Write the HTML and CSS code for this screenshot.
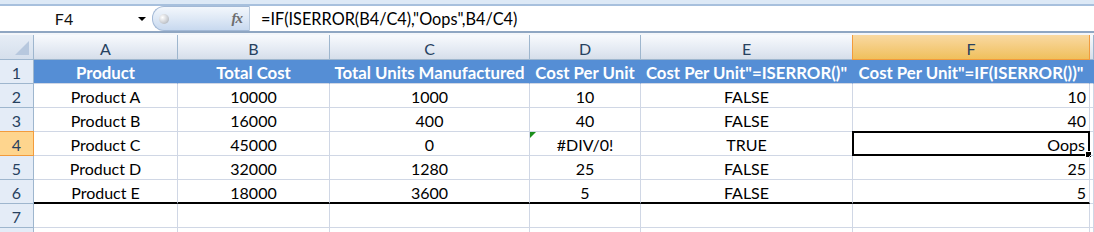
FILE: index.html
```html
<!DOCTYPE html>
<html>
<head>
<meta charset="utf-8">
<link rel="stylesheet" href="styles.css">
</head>
<body>
<div class="app">
  <div class="topstrip"></div>
  <div class="fbar">
    <div class="namebox"><span class="nb-text">F4</span><span class="nb-arrow"></span></div>
    <div class="fxbtn"><span class="knob"></span><span class="fx">fx</span></div>
    <div class="formula">=IF(ISERROR(B4/C4),"Oops",B4/C4)</div>
  </div>
  <div class="fbar-gap"></div>
  <div class="sheet">
    <div class="ch corner"><span class="tri"></span></div>
    <div class="ch">A</div><div class="ch">B</div><div class="ch">C</div><div class="ch">D</div><div class="ch">E</div><div class="ch sel">F</div><div class="ch"></div>

    <div class="rh">1</div>
    <div class="c hd">Product</div><div class="c hd">Total Cost</div><div class="c hd">Total Units Manufactured</div><div class="c hd">Cost Per Unit</div><div class="c hd">Cost Per Unit"=ISERROR()"</div><div class="c hd">Cost Per Unit"=IF(ISERROR())"</div><div class="c hd"></div>

    <div class="rh">2</div>
    <div class="c">Product A</div><div class="c">10000</div><div class="c">1000</div><div class="c">10</div><div class="c">FALSE</div><div class="c r">10</div><div class="c"></div>

    <div class="rh">3</div>
    <div class="c">Product B</div><div class="c">16000</div><div class="c">400</div><div class="c">40</div><div class="c">FALSE</div><div class="c r">40</div><div class="c"></div>

    <div class="rh sel">4</div>
    <div class="c">Product C</div><div class="c">45000</div><div class="c">0</div><div class="c err"><span class="green"></span>#DIV/0!</div><div class="c">TRUE</div><div class="c r active">Oops<span class="handle"></span></div><div class="c"></div>

    <div class="rh">5</div>
    <div class="c">Product D</div><div class="c">32000</div><div class="c">1280</div><div class="c">25</div><div class="c">FALSE</div><div class="c r">25</div><div class="c"></div>

    <div class="rh">6</div>
    <div class="c th">Product E</div><div class="c th">18000</div><div class="c th">3600</div><div class="c th">5</div><div class="c th">FALSE</div><div class="c r th">5</div><div class="c"></div>

    <div class="rh">7</div>
    <div class="c"></div><div class="c"></div><div class="c"></div><div class="c"></div><div class="c"></div><div class="c"></div><div class="c"></div>

    <div class="rh"></div>
    <div class="c"></div><div class="c"></div><div class="c"></div><div class="c"></div><div class="c"></div><div class="c"></div><div class="c"></div>
  </div>
</div>
</body>
</html>
```

FILE: styles.css
```css
html, body {
  margin: 0;
  padding: 0;
  background: #ffffff;
  overflow: hidden;
}
.app {
  width: 1094px;
  height: 232px;
  overflow: hidden;
  font-family: Lato, "Open Sans", "Liberation Sans", sans-serif;
  font-size: 16px;
  color: #000;
}
.topstrip {
  height: 4px;
  background: #dde9f6;
  border-bottom: 2px solid #a7c0dd;
}
.fbar {
  height: 25px;
  display: flex;
  background: #ffffff;
  border-bottom: 2px solid #8fa6c2;
}
.namebox {
  width: 152px;
  display: flex;
  align-items: center;
  position: relative;
}
.nb-text {
  flex: 1;
  text-align: center;
  padding-right: 10px;
  color: #111;
}
.nb-arrow {
  width: 0;
  height: 0;
  border-left: 4px solid transparent;
  border-right: 4px solid transparent;
  border-top: 4px solid #000;
  margin-right: 6px;
}
.fxbtn {
  width: 98px;
  height: 25px;
  box-sizing: border-box;
  border: 1px solid #a3b9d6;
  border-right: 1px solid #b9c9dc;
  border-radius: 12px 0 0 12px;
  background: linear-gradient(#f3f7fc, #dce7f5 55%, #c8d9ef);
  display: flex;
  align-items: center;
  justify-content: space-between;
  padding: 0 7px 0 6px;
}
.knob {
  width: 10px;
  height: 10px;
  border-radius: 50%;
  background: radial-gradient(circle at 35% 35%, #ffffff, #c9ccd1 60%, #9aa0a8);
}
.fx {
  font-family: "Liberation Serif", "DejaVu Serif", serif;
  font-style: italic;
  font-weight: bold;
  font-size: 15px;
  color: #6e6e6e;
  letter-spacing: -1px;
}
.formula {
  flex: 1;
  display: flex;
  align-items: center;
  padding-left: 11px;
  color: #000;
  font-size: 16.3px;
}
.fbar-gap {
  height: 2px;
  background: #f3f6fa;
}
.sheet {
  display: grid;
  grid-template-columns: 34px 144px 152px 200px 111px 212px 237px 1fr;
  grid-template-rows: 25px repeat(8, 24px);
}
.ch {
  box-sizing: border-box;
  background: linear-gradient(#f8fafd, #e4eaf3 60%, #d6deea);
  border-right: 1px solid #9eb6ce;
  border-bottom: 1px solid #9eb6ce;
  display: flex;
  align-items: center;
  justify-content: center;
  color: #27415f;
  padding-top: 2px;
}
.ch.sel {
  background: linear-gradient(#f9d9a2, #f4cb7c 55%, #f0c05c);
  border-left: 1px solid #f29b3c;
  border-right: 1px solid #f29b3c;
  border-bottom: 1px solid #f29b3c;
  margin-left: -1px;
}
.corner {
  position: relative;
  background: linear-gradient(#e6edf6, #d5dfec);
  border-right: 1px solid #9eb6ce;
}
.tri {
  position: absolute;
  right: 4px;
  bottom: 4px;
  width: 0;
  height: 0;
  border-left: 14px solid transparent;
  border-bottom: 14px solid #b7c8de;
}
.rh {
  box-sizing: border-box;
  background: #e4ecf7;
  border-right: 1px solid #9eb6ce;
  border-bottom: 1px solid #9eb6ce;
  display: flex;
  align-items: center;
  justify-content: center;
  color: #27415f;
  padding-top: 1px;
}
.rh.sel {
  background: #fed58e;
  border-right: 1px solid #f29b3c;
  border-bottom: 1px solid #f29b3c;
  border-top: 1px solid #f29b3c;
  margin-top: -1px;
  padding-top: 2px;
}
.c {
  box-sizing: border-box;
  border-right: 1px solid #d0d7e5;
  border-bottom: 1px solid #d0d7e5;
  display: flex;
  align-items: center;
  justify-content: center;
  white-space: nowrap;
  position: relative;
  padding-top: 1px;
}
.c.r {
  justify-content: flex-end;
  padding-right: 3px;
}
.c.hd {
  background: #558ed5;
  color: #ffffff;
  font-weight: bold;
  font-size: 16.8px;
  border-right-color: #558ed5;
}
.c.th {
  border-bottom: 2px solid #000;
  padding-top: 2px;
}
.green {
  position: absolute;
  left: 0;
  top: 0;
  width: 0;
  height: 0;
  border-top: 6px solid #1c8f1c;
  border-right: 6px solid transparent;
}
.active {
  border: 2px solid #000;
  margin-top: -1px;
  margin-left: -1px;
  height: 25px;
}
.handle {
  position: absolute;
  right: -4px;
  bottom: -4px;
  width: 5px;
  height: 5px;
  background: #000;
  border: 1px solid #fff;
}
```
